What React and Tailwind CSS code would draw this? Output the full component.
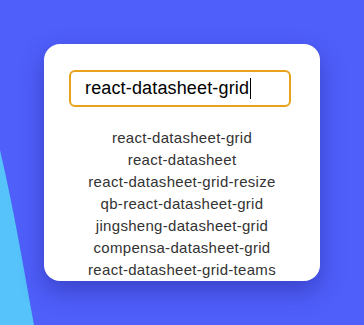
const results = [
  "react-datasheet-grid",
  "react-datasheet",
  "react-datasheet-grid-resize",
  "qb-react-datasheet-grid",
  "jingsheng-datasheet-grid",
  "compensa-datasheet-grid",
  "react-datasheet-grid-teams",
];

function App() {
  const query = "react-datasheet-grid";

  return (
    <div className="relative w-[364px] h-[325px] overflow-hidden bg-[#4f5ffa] font-['Liberation_Sans',Arial,sans-serif]">
      {/* light curve on the left */}
      <svg className="absolute left-0 top-0" width="364" height="325" viewBox="0 0 364 325">
        <path d="M0 150 C 14 210, 24 270, 34 325 L0 325 Z" fill="#56c3fb" />
      </svg>

      <div className="relative ml-[44px] mt-[44px] w-[276px] h-[237px] bg-white rounded-[16px] overflow-hidden shadow-[0_10px_24px_rgba(30,30,140,0.45)]">
        <div className="pt-[26px] px-[25px]">
          {/* search box with caret */}
          <div className="w-[222px] h-[37px] border-2 border-[#e8a21c] rounded-[6px] pl-[14px] flex items-center text-[18px] tracking-[0.15px] text-black">
            <span>{query}</span>
            <span className="w-px h-[21px] bg-black ml-[1px]" />
          </div>
        </div>
        <ul className="mt-[20px] flex flex-col items-center">
          {results.map((r) => (
            <li key={r} className="h-[22px] leading-[22px] text-[15px] tracking-[0.3px] text-[#333]">
              {r}
            </li>
          ))}
        </ul>
      </div>
    </div>
  );
}

export default App;
